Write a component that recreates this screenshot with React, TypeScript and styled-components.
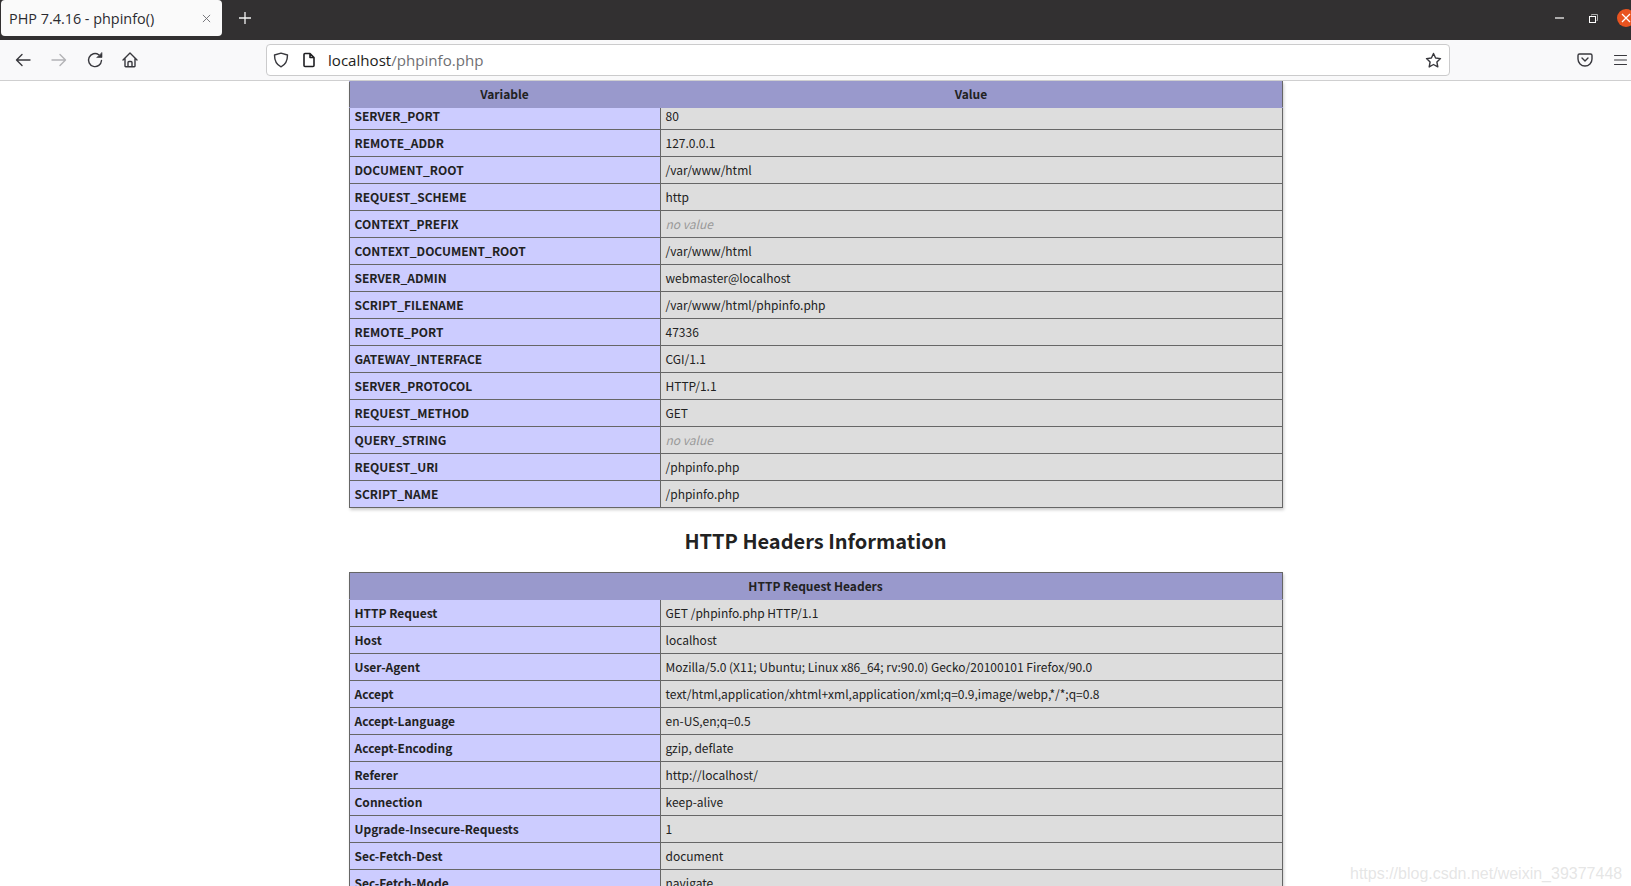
import React from 'react';
import styled, { createGlobalStyle } from 'styled-components';

const Global = createGlobalStyle`
  html, body { margin: 0; padding: 0; height: 100%; overflow: hidden; background: #fff; }
  #root { height: 100%; }
`;

const Window = styled.div`
  width: 1631px; height: 886px; display: flex; flex-direction: column; overflow: hidden; position: relative;
  font-family: "Noto Sans CJK SC", "Noto Sans", sans-serif; color: #222;
`;
const TabBar = styled.div`
  height: 40px; flex: none; background: #323031; display: flex; align-items: flex-start; padding-left: 1px;
`;
const Tab = styled.div`
  width: 221px; height: 36px; background: #fafafa; border-radius: 4px; display: flex; align-items: center;
  padding: 0 11px 0 8px; box-sizing: border-box; justify-content: space-between;
  font-family: "Open Sans", "Noto Sans", sans-serif; font-size: 14.4px; color: #2b2b30;
`;
const NewTab = styled.div`
  width: 20px; height: 36px; margin-left: 13px; display: flex; align-items: center; justify-content: center;
`;
const WindowControls = styled.div`
  margin-left: auto; height: 36px; display: flex; align-items: center;
`;
const CtrlBtn = styled.div`
  width: 14px; height: 14px; display: flex; align-items: center; justify-content: center; margin-right: 20px;
`;
const CloseBtn = styled.div`
  width: 18px; height: 18px; border-radius: 50%; background: #e95420; margin-left: -3px; margin-right: -4px;
  display: flex; align-items: center; justify-content: center; flex: none;
`;
const ToolBar = styled.div`
  height: 41px; flex: none; box-sizing: border-box; background: #f9f9fa; border-bottom: 1px solid #cfcfd0;
  display: flex; align-items: center; padding-left: 12px;
`;
const NavBtn = styled.div<{ $tight?: boolean }>`
  width: 22px; height: 22px; margin-right: ${p => p.$tight ? 13 : 14}px; display: flex; align-items: center; justify-content: center; flex: none;
`;
const UrlBar = styled.div`
  width: 1184px; height: 32px; box-sizing: border-box; margin-left: 111px; flex: none;
  background: #fff; border: 1px solid #cbcbcc; border-radius: 4px; display: flex; align-items: center; padding: 0 7px 0 6px;
`;
const UrlText = styled.div`
  font-family: "Open Sans", "Noto Sans", sans-serif; font-size: 15.1px; margin-left: 11px; flex: 1; color: #6f6f73;
  b { font-weight: 400; color: #1d1d20; }
`;
const RightIcons = styled.div`
  margin-left: 127px; display: flex; align-items: center; gap: 21px; flex: none;
`;
const Page = styled.main`
  flex: 1; overflow: hidden; background: #fff; display: flex; flex-direction: column; align-items: center;
`;
const Table = styled.table`
  border-collapse: collapse; width: 934px; table-layout: fixed; flex: none; box-shadow: 1px 2px 3px #ccc;
  font-size: 12px; line-height: 17px; color: #222;
`;
const KeyCol = styled.col`width: 311px;`;
const HeadCell = styled.th<{ $edge: 'left' | 'right' | 'top' }>`
  background: #99c; height: ${p => p.$edge === 'top' ? 27 : 26}px; box-sizing: border-box; padding: 0 5px 2px; font-weight: 700; text-align: center;
  border: 1px solid #99c;
  ${p => p.$edge === 'left' ? 'border-left-color:#666;' : ''}
  ${p => p.$edge === 'right' ? 'border-right-color:#666;' : ''}
  ${p => p.$edge === 'top' ? 'border-top-color:#666; border-left-color:#666; border-right-color:#666;' : ''}
`;
const Key = styled.td<{ $cut?: boolean }>`
  background: #ccf; box-sizing: border-box; border: 1px solid #666; padding: ${p => p.$cut ? '0 5px 3px' : '3px 5px 5px'};
  font-weight: 700; height: ${p => p.$cut ? 22 : 27}px; vertical-align: ${p => p.$cut ? 'top' : 'middle'};
  ${p => p.$cut ? 'border-top: 0; line-height: 15px;' : ''}
`;
const Val = styled.td<{ $cut?: boolean }>`
  background: #ddd; box-sizing: border-box; border: 1px solid #666; padding: ${p => p.$cut ? '0 5px 3px' : '3px 5px 5px'};
  vertical-align: ${p => p.$cut ? 'top' : 'middle'};
  ${p => p.$cut ? 'border-top: 0; line-height: 15px;' : ''}
`;
const NoValue = styled.i`color: #999;`;
const Heading = styled.h2`
  font-size: 20px; line-height: 30px; font-weight: 700; margin: 18px 0 16px; color: #222; text-align: center; flex: none;
`;
const Watermark = styled.div`
  position: absolute; left: 1350px; bottom: 3px; font-family: "Liberation Sans", sans-serif; font-size: 16px;
  color: rgba(190,190,190,0.4);
`;

const Ico = { fill: 'none', stroke: '#38383d', strokeWidth: 1.4, strokeLinecap: 'round' as const, strokeLinejoin: 'round' as const };

const server: [string, string | null][] = [
  ['REMOTE_ADDR', '127.0.0.1'], ['DOCUMENT_ROOT', '/var/www/html'], ['REQUEST_SCHEME', 'http'], ['CONTEXT_PREFIX', null],
  ['CONTEXT_DOCUMENT_ROOT', '/var/www/html'], ['SERVER_ADMIN', 'webmaster@localhost'], ['SCRIPT_FILENAME', '/var/www/html/phpinfo.php'],
  ['REMOTE_PORT', '47336'], ['GATEWAY_INTERFACE', 'CGI/1.1'], ['SERVER_PROTOCOL', 'HTTP/1.1'], ['REQUEST_METHOD', 'GET'],
  ['QUERY_STRING', null], ['REQUEST_URI', '/phpinfo.php'], ['SCRIPT_NAME', '/phpinfo.php'],
];
const headers: [string, string][] = [
  ['HTTP Request', 'GET /phpinfo.php HTTP/1.1'], ['Host', 'localhost'],
  ['User-Agent', 'Mozilla/5.0 (X11; Ubuntu; Linux x86_64; rv:90.0) Gecko/20100101 Firefox/90.0'],
  ['Accept', 'text/html,application/xhtml+xml,application/xml;q=0.9,image/webp,*/*;q=0.8'],
  ['Accept-Language', 'en-US,en;q=0.5'], ['Accept-Encoding', 'gzip, deflate'], ['Referer', 'http://localhost/'],
  ['Connection', 'keep-alive'], ['Upgrade-Insecure-Requests', '1'], ['Sec-Fetch-Dest', 'document'], ['Sec-Fetch-Mode', 'navigate'],
];

export default function App() {
  return (
    <Window>
      <Global />
      <TabBar>
        <Tab>
          <span>PHP 7.4.16 - phpinfo()</span>
          <svg width="9" height="9" viewBox="0 0 10 10"><path d="M1 1l8 8M9 1l-8 8" stroke="#6a6a6f" strokeWidth="1" /></svg>
        </Tab>
        <NewTab>
          <svg width="14" height="14" viewBox="0 0 14 14"><path d="M7 1v12M1 7h12" stroke="#f2f2f2" strokeWidth="1.3" /></svg>
        </NewTab>
        <WindowControls>
          <CtrlBtn><svg width="9" height="2" viewBox="0 0 9 2"><path d="M0 1h9" stroke="#fff" strokeWidth="1.2" /></svg></CtrlBtn>
          <CtrlBtn>
            <svg width="9" height="9" viewBox="0 0 9 9" fill="none"><path d="M2.500 1.500V.5h6v6h-1" stroke="#aaa" strokeWidth="1" /><rect x=".5" y="2.500" width="6" height="6" stroke="#fff" strokeWidth="1" /></svg>
          </CtrlBtn>
          <CloseBtn><svg width="10" height="10" viewBox="0 0 10 10"><path d="M1 1l8 8M9 1l-8 8" stroke="#fff" strokeWidth="1.3" /></svg></CloseBtn>
        </WindowControls>
      </TabBar>
      <ToolBar>
        <NavBtn><svg width="16" height="16" viewBox="0 0 16 16" {...Ico}><path d="M15 8H1.500M7 2.500 1.500 8 7 13.500" /></svg></NavBtn>
        <NavBtn><svg width="16" height="16" viewBox="0 0 16 16" {...Ico} stroke="#b3b3b6"><path d="M1 8h13.500M9 2.500 14.500 8 9 13.500" /></svg></NavBtn>
        <NavBtn $tight><svg width="16" height="16" viewBox="0 0 16 16" {...Ico}><path d="M11.800 2.800A6.500 6.500 0 1 0 14.500 8.500" /><path d="M10 5.500h5V.8z" fill="#38383d" strokeWidth={0.6} /></svg></NavBtn>
        <NavBtn><svg width="16" height="16" viewBox="0 0 16 16" {...Ico}><path d="M1 8 8 1 15 8M3 6.500V14a.7.7 0 0 0 .7.7h8.600a.7.7 0 0 0 .7-.7V6.500M6 14.700V10.500a1 1 0 0 1 1-1h2a1 1 0 0 1 1 1v4.200" /></svg></NavBtn>
        <UrlBar>
          <svg width="16" height="16" viewBox="0 0 16 16" {...Ico}><path d="M8 1.200 14.500 3c0 6-1.500 9.500-6.500 11.800C3 12.500 1.500 9 1.500 3z" /></svg>
          <svg width="16" height="16" viewBox="0 0 16 16" {...Ico} strokeWidth={1.6} stroke="#1f1f22" style={{ marginLeft: 12 }}><path d="M3 2.500a1 1 0 0 1 1-1h5l4 4v8a1 1 0 0 1-1 1H4a1 1 0 0 1-1-1zM9 1.500v4h4" /></svg>
          <UrlText><b>localhost</b>/phpinfo.php</UrlText>
          <svg width="17" height="17" viewBox="0 0 17 17" {...Ico}><path d="M8.500 1.500 10.600 6l4.900.6-3.600 3.400.9 4.900-4.300-2.400-4.300 2.400.9-4.900L1.500 6.600 6.400 6z" /></svg>
        </UrlBar>
        <RightIcons>
          <svg width="16" height="16" viewBox="0 0 16 16" {...Ico}><path d="M2.500 2h11A1.500 1.500 0 0 1 15 3.500V7a7 7 0 0 1-14 0V3.500A1.500 1.500 0 0 1 2.500 2zM5 6l3 3 3-3" /></svg>
          <svg width="13" height="16" viewBox="0 0 13 16" {...Ico} strokeWidth={1.1}><path d="M.5 3.500h12M.5 8h12M.5 12.500h12" /></svg>
        </RightIcons>
      </ToolBar>
      <Page>
        <Table>
          <colgroup><KeyCol /><col /></colgroup>
          <thead>
            <tr><HeadCell $edge="left">Variable</HeadCell><HeadCell $edge="right">Value</HeadCell></tr>
          </thead>
          <tbody>
            <tr><Key $cut>SERVER_PORT</Key><Val $cut>80</Val></tr>
            {server.map(([k, v]) => (
              <tr key={k}><Key>{k}</Key><Val>{v === null ? <NoValue>no value</NoValue> : v}</Val></tr>
            ))}
          </tbody>
        </Table>
        <Heading>HTTP Headers Information</Heading>
        <Table>
          <colgroup><KeyCol /><col /></colgroup>
          <thead>
            <tr><HeadCell $edge="top" colSpan={2}>HTTP Request Headers</HeadCell></tr>
          </thead>
          <tbody>
            {headers.map(([k, v]) => (
              <tr key={k}><Key>{k}</Key><Val>{v}</Val></tr>
            ))}
          </tbody>
        </Table>
      </Page>
      <Watermark>https://blog.csdn.net/weixin_39377448</Watermark>
    </Window>
  );
}
